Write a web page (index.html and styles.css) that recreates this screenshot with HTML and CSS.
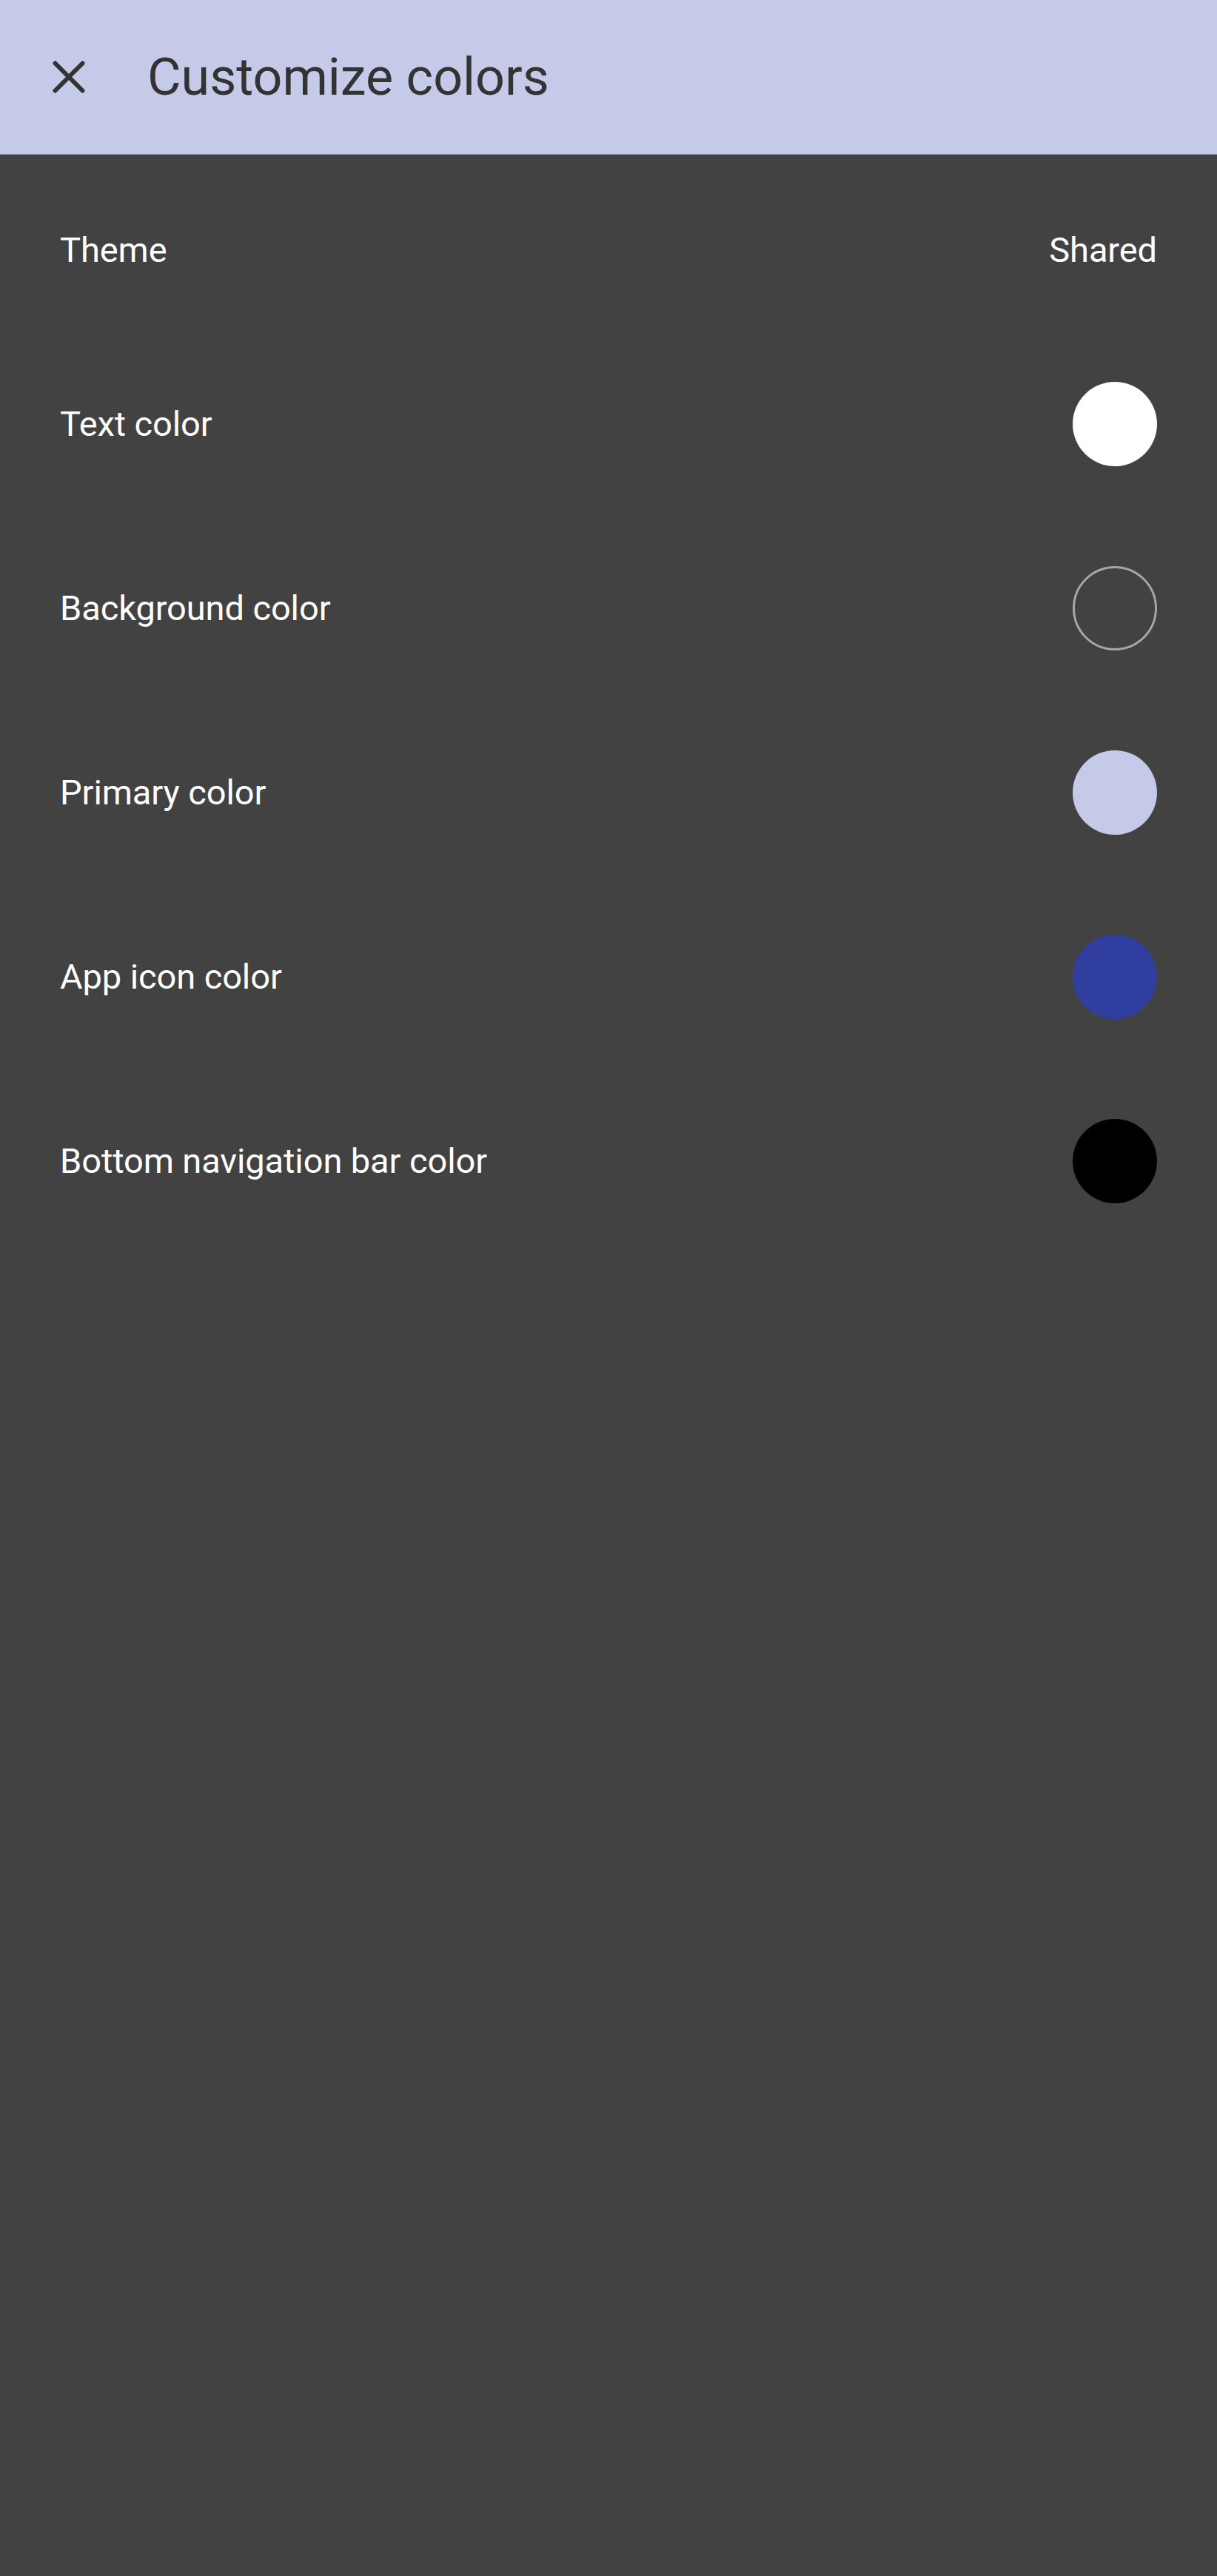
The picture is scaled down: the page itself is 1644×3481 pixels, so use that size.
FILE: index.html
```html
<!DOCTYPE html>
<html lang="en">
<head>
    <meta charset="UTF-8">
    <meta name="viewport" content="width=device-width, initial-scale=1.0">
    <title>Customize colors</title>
    <link rel="stylesheet" href="styles.css">
</head>
<body>
    <div class="toolbar">
        <button class="close-btn" aria-label="Close">
            <svg viewBox="0 0 74 74" width="74" height="74">
                <path d="M18.5 18.5L55.5 55.5M55.5 18.5L18.5 55.5" stroke="#333" stroke-width="6" stroke-linecap="round" fill="none"/>
            </svg>
        </button>
        <div class="title">Customize colors</div>
    </div>
    <div class="settings">
        <div class="row row-theme">
            <span>Theme</span>
            <span class="value">Shared</span>
        </div>
        <div class="row">
            <span>Text color</span>
            <span class="swatch swatch-text"></span>
        </div>
        <div class="row">
            <span>Background color</span>
            <span class="swatch swatch-bg"></span>
        </div>
        <div class="row">
            <span>Primary color</span>
            <span class="swatch swatch-primary"></span>
        </div>
        <div class="row">
            <span>App icon color</span>
            <span class="swatch swatch-icon"></span>
        </div>
        <div class="row">
            <span>Bottom navigation bar color</span>
            <span class="swatch swatch-navbar"></span>
        </div>
    </div>
</body>
</html>
```

FILE: styles.css
```css
body {
    font-family: Roboto, "Noto Sans", Arial, sans-serif;
    margin: 0;
    padding: 0;
    background-color: #424242;
    min-height: 100vh;
}
.toolbar {
    background-color: #c5cae9;
    height: 208px;
    border-bottom: 1px solid #9a9db8;
    display: flex;
    align-items: center;
    padding-left: 56px;
    gap: 69px;
}
.close-btn {
    background: none;
    border: none;
    padding: 0;
    width: 74px;
    height: 74px;
    cursor: pointer;
}
.close-btn svg {
    display: block;
}
.title {
    font-size: 70px;
    color: #333333;
    line-height: 1;
}
.settings {
    padding-top: 18px;
}
.row {
    height: 249px;
    display: flex;
    justify-content: space-between;
    align-items: center;
    padding: 0 81px;
    color: #ffffff;
    font-size: 47px;
    letter-spacing: -0.1px;
}
.row-theme {
    height: 221px;
}
.swatch {
    width: 114px;
    height: 114px;
    border-radius: 50%;
    box-sizing: border-box;
}
.swatch-text {
    background-color: #ffffff;
}
.swatch-bg {
    border: 3px solid #a6a6a6;
}
.swatch-primary {
    background-color: #c5cae9;
}
.swatch-icon {
    background-color: #303f9f;
}
.swatch-navbar {
    background-color: #000000;
}
```
